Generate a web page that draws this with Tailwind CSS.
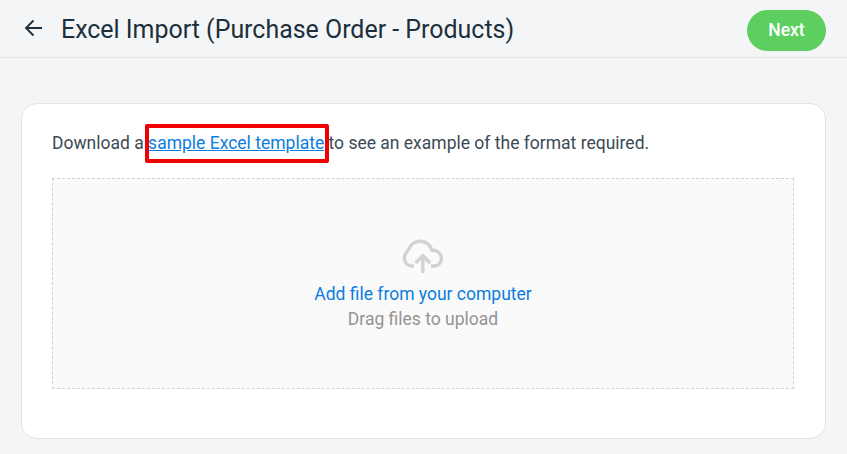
<!DOCTYPE html>
<html lang="en">
<head>
    <meta charset="UTF-8">
    <title>Excel Import</title>
    <script src="https://cdn.jsdelivr.net/npm/@tailwindcss/browser@4"></script>
</head>
<body class="h-[454px] overflow-hidden bg-[#f4f5f7] font-['Roboto',sans-serif]">
    <!-- Header -->
    <div class="flex h-[58px] items-center border-b border-[#e3e4e6] pl-[24px] pr-[21px]">
        <svg class="-mt-[1px] h-[18px] w-[19px]" viewBox="0 0 19 18" fill="none" stroke="#1c2f3a" stroke-width="1.800">
            <path d="M18 9H2M9.500 1.500 2 9l7.500 7.500" />
        </svg>
        <h1 class="ml-[18px] mt-[3px] text-[24.950px] leading-[30px] text-[#1c2f3a]">Excel Import (Purchase Order - Products)</h1>
        <button class="ml-auto mt-[4px] h-[41px] w-[79px] rounded-full bg-[#5ccf60] text-[17.500px] font-medium text-white">Next</button>
    </div>

    <!-- Card -->
    <div class="mx-[21px] mt-[45px] h-[336px] rounded-[16px] border border-[#e3e4e6] bg-white pl-[30px] pr-[31px] pt-[29px]">
        <p class="h-[21px] text-[17.500px] leading-[21px] text-[#3b4a54]">
            Download a <span class="relative"><a class="text-[#0a7de0] underline">sample Excel template</a><span class="absolute -left-[3px] -right-[5px] -top-[9px] -bottom-[10px] rounded-[2px] border-[4px] border-[#f00000]"></span></span> to see an example of the format required.
        </p>
        <div class="mt-[24px] flex h-[211px] flex-col items-center border border-dashed border-[#d3d3d3] bg-[#fafafa] pt-[60px]">
            <svg class="h-[36px] w-[42px]" viewBox="0 0 42 36" fill="none" stroke="#d2d2d2" stroke-width="3.400">
                <path d="M12 27H10C5.500 27 2.500 23.500 2.500 19C2.500 15.500 4 13 6.500 11C8 5.500 12.500 2.200 18 2.200C24 2.200 28 6 30 11C35.500 11 39.500 15 39.500 19.500C39.500 24 36 27 32 27H29" />
                <path d="M20.800 34V17M13.500 24l7.300-7.300 7.300 7.300" />
            </svg>
            <a class="mt-[7px] text-[17.500px] leading-[25px] text-[#0a7de0]">Add file from your computer</a>
            <span class="text-[17.500px] leading-[25px] text-[#949494]">Drag files to upload</span>
        </div>
    </div>
</body>
</html>
